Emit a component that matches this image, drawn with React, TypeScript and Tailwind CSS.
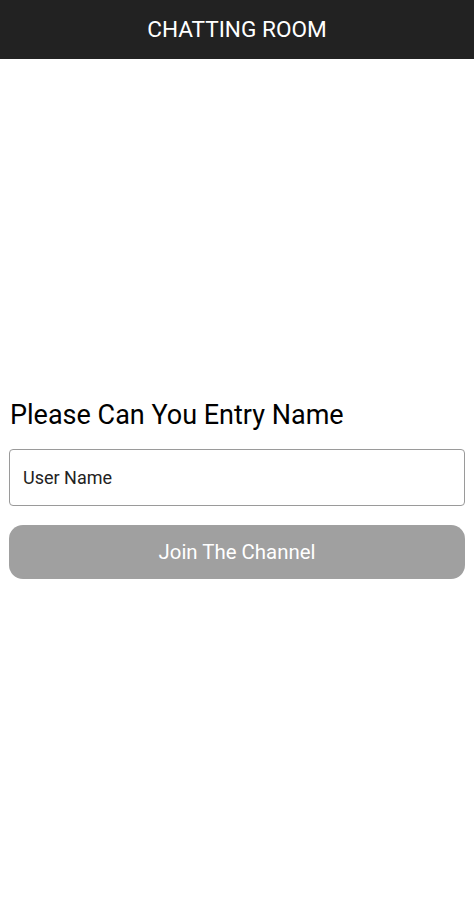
import React from "react";

export default function App() {
  return (
    <div className="flex h-[916px] w-full flex-col bg-white" style={{ fontFamily: "Roboto, 'Liberation Sans', sans-serif" }}>
      <header className="flex h-[59px] shrink-0 items-center justify-center bg-[#222222]">
        <h1 className="text-[22.6px] font-normal text-white">CHATTING ROOM</h1>
      </header>
      <main className="flex flex-1 flex-col justify-center px-[9px] pt-[2px]">
        <h2 className="pl-px text-[27px] leading-[34px] text-black">Please Can You Entry Name</h2>
        <div className="mt-[17px] flex h-[57px] items-center rounded-[4px] border border-[#9a9a9a] px-[13px]">
          <span className="text-[18px] text-[#222222]">User Name</span>
        </div>
        <button className="mt-[19px] flex h-[54px] w-full items-center justify-center rounded-[14px] bg-[#a0a0a0] text-[20.4px] text-white">
          Join The Channel
        </button>
      </main>
    </div>
  );
}
